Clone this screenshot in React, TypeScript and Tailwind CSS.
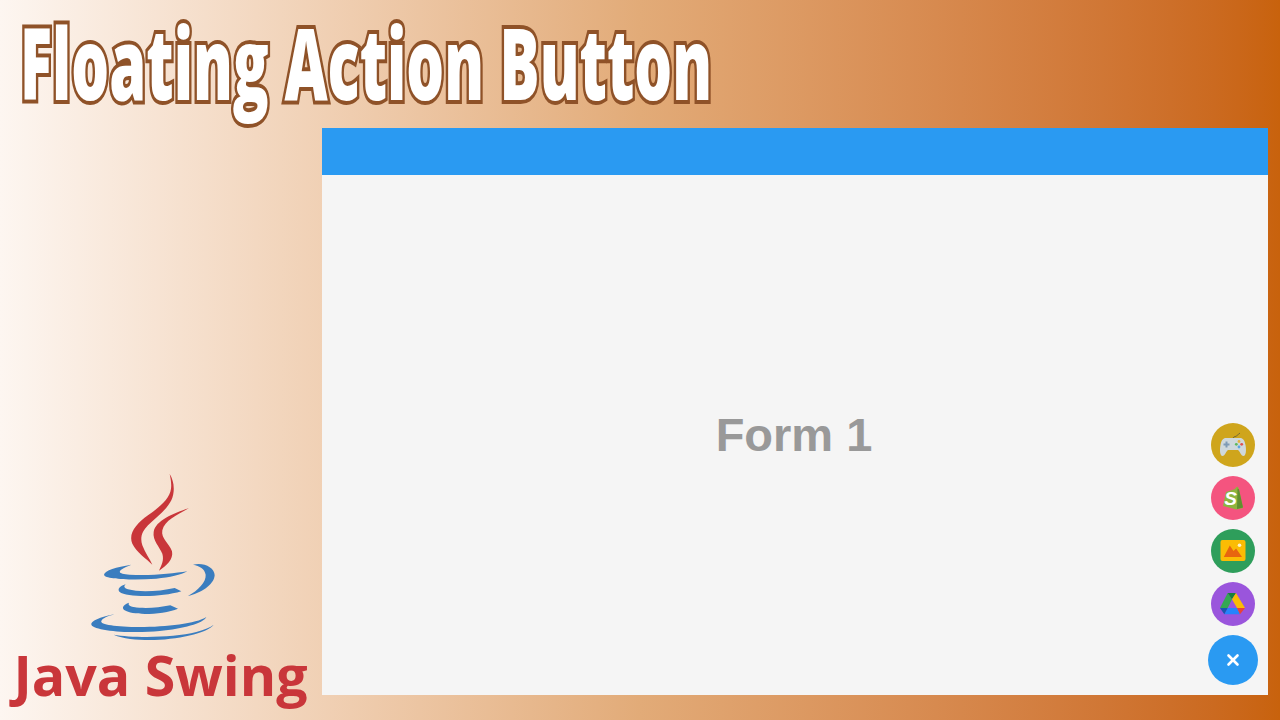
import { X } from "lucide-react";

function JavaLogo() {
  return (
    <svg width="134" height="170" viewBox="260 20 400 510">
      <g fill="#c9363a">
        <path d="M510 26C522 45 528 75 515 105C500 135 470 155 445 180C428 198 420 215 428 240C436 262 450 280 458 298C440 280 410 260 398 235C385 205 410 175 445 150C480 125 510 100 514 70C516 55 513 40 510 26Z" />
        <path d="M568 128C530 150 495 165 488 195C483 220 510 235 517 258C522 282 500 302 478 316C485 300 494 285 488 265C480 245 458 225 462 200C468 165 520 145 568 128Z" />
      </g>
      <g fill="#3a7dbf">
        <path d="M395 298C350 305 315 315 313 328C315 342 400 345 470 340C510 337 545 328 563 318C520 325 450 332 390 328C355 325 345 318 395 298Z" />
        <path d="M580 298C610 290 645 305 645 330C643 360 600 385 565 392C595 375 620 350 618 328C615 310 600 302 580 298Z" />
        <path d="M378 357C360 362 352 372 360 380C380 395 480 398 545 378L525 368C480 378 420 382 385 372C372 368 372 362 378 357Z" />
        <path d="M388 412C370 418 365 428 375 435C400 452 490 448 535 430L512 420C475 428 430 430 402 425C388 422 385 418 388 412Z" />
        <path d="M345 447C300 455 272 468 275 478C285 498 400 505 480 497C550 490 610 475 620 455C590 475 500 485 420 485C350 485 300 478 305 467C310 458 325 452 345 447Z" />
        <path d="M342 508C400 518 520 518 590 500C615 493 632 486 642 478C625 503 530 524 450 524C410 524 370 520 342 508Z" />
      </g>
    </svg>
  );
}

function GamepadIcon() {
  return (
    <svg width="28" height="26" viewBox="0 0 28 26">
      <path d="M14 6C15 4 17 5 18 3.500C19 2.500 20 2 21 1" fill="none" stroke="#5d5a3c" strokeWidth="0.8" />
      <path d="M7 6H21C24 6 25.500 8 26.500 13C27.500 18 27 24 24.500 24C22 24 20.500 18.500 19 18H9C7.500 18.500 6 24 3.500 24C1 24 0.500 18 1.500 13C2.500 8 4 6 7 6Z" fill="#cfd8dc" />
      <path d="M6.500 9.500H8.500V11.500H10.500V13.500H8.500V15.500H6.500V13.500H4.500V11.500H6.500Z" fill="#7f9ab5" />
      <circle cx="20" cy="9.500" r="1.400" fill="#e8b23a" />
      <circle cx="20" cy="15" r="1.400" fill="#5aa7e0" />
      <circle cx="17.300" cy="12.300" r="1.400" fill="#5cb85c" />
      <circle cx="22.700" cy="12.300" r="1.400" fill="#e0524f" />
    </svg>
  );
}

function ShopifyIcon() {
  return (
    <svg width="22" height="24" viewBox="0 0 22 24">
      <path d="M1 20L4 6L13 3C14 1 15.500 0.500 16 1L17 3.500L21 22L14.500 23.500Z" fill="#8db43e" />
      <path d="M15.500 2.500L17 3.500L21 21.500L15 23Z" fill="#5f8f2f" />
      <text x="8.500" y="19" textAnchor="middle" fill="#ffffff" className="font-['Liberation_Sans',sans-serif] text-[19px] font-bold italic">
        S
      </text>
    </svg>
  );
}

function ImageIcon() {
  return (
    <svg width="26" height="24" viewBox="0 0 26 24">
      <rect x="0.500" y="1" width="25" height="21" rx="2" fill="#fbbc04" />
      <path d="M3.800 18L9.800 6.600L13.500 12L16.100 9.500L22 18Z" fill="#e8650f" />
      <circle cx="19.500" cy="6.200" r="1.800" fill="#fef3c7" />
    </svg>
  );
}

function DriveIcon() {
  return (
    <svg width="26" height="24" viewBox="0 0 26 24">
      <path d="M7.700 1L12 7.300L7.700 16H0Z" fill="#34a853" />
      <path d="M7.700 1H16L12 7.300Z" fill="#188038" />
      <path d="M16 1L25 16H17L12 7.300Z" fill="#fbbc04" />
      <path d="M7.700 16H17L20 22.300H4.300Z" fill="#2684fc" />
      <path d="M0 16H7.700L4.300 22.300Z" fill="#1a56b0" />
      <path d="M17 16H25L20 22.300Z" fill="#ea4335" />
    </svg>
  );
}

const fabs = [
  { bg: "bg-[#cfa51c]", icon: <GamepadIcon /> },
  { bg: "bg-[#f4547f]", icon: <ShopifyIcon /> },
  { bg: "bg-[#2e9e5b]", icon: <ImageIcon /> },
  { bg: "bg-[#9a55dc]", icon: <DriveIcon /> },
];

export default function App() {
  return (
    <div className="flex h-[720px] w-[1280px] flex-col bg-gradient-to-r from-[#fdf6f1] via-[#e2ab78] to-[#c8620c]">
      <div className="flex h-[128px] items-start pl-[20px] pt-[6px]">
        <h1 className="w-max shrink-0 origin-left scale-x-[0.595] whitespace-nowrap font-['Open_Sans',sans-serif] text-[100px] font-extrabold leading-[110px] text-white [paint-order:stroke_fill] [-webkit-text-stroke:8px_#8f5228]">
          Floating Action Button
        </h1>
      </div>
      <div className="flex h-[567px]">
        <div className="flex w-[322px] flex-col items-center justify-end">
          <div className="mb-[12px] pr-[17px]">
            <JavaLogo />
          </div>
          <div className="pr-[1px] font-['Open_Sans',sans-serif] text-[55.5px] font-bold leading-[41px] text-[#c9363a]">
            Java Swing
          </div>
        </div>
        <div className="flex w-[946px] flex-col bg-[#f5f5f5]">
          <div className="h-[47px] bg-[#2a9af2]" />
          <div className="relative flex flex-1 items-center justify-center pr-[2px] font-['Liberation_Sans',sans-serif] text-[47px] font-bold text-[#999999]">
            Form 1
            <div className="absolute bottom-[10px] right-[10px] flex w-[50px] flex-col items-center gap-[9px]">
              {fabs.map((fab, i) => (
                <button key={i} className={`flex h-[44px] w-[44px] items-center justify-center rounded-full ${fab.bg}`}>
                  {fab.icon}
                </button>
              ))}
              <button className="flex h-[50px] w-[50px] items-center justify-center rounded-full bg-[#2a9af2] text-white">
                <X size={18} strokeWidth={3.5} />
              </button>
            </div>
          </div>
        </div>
      </div>
    </div>
  );
}
